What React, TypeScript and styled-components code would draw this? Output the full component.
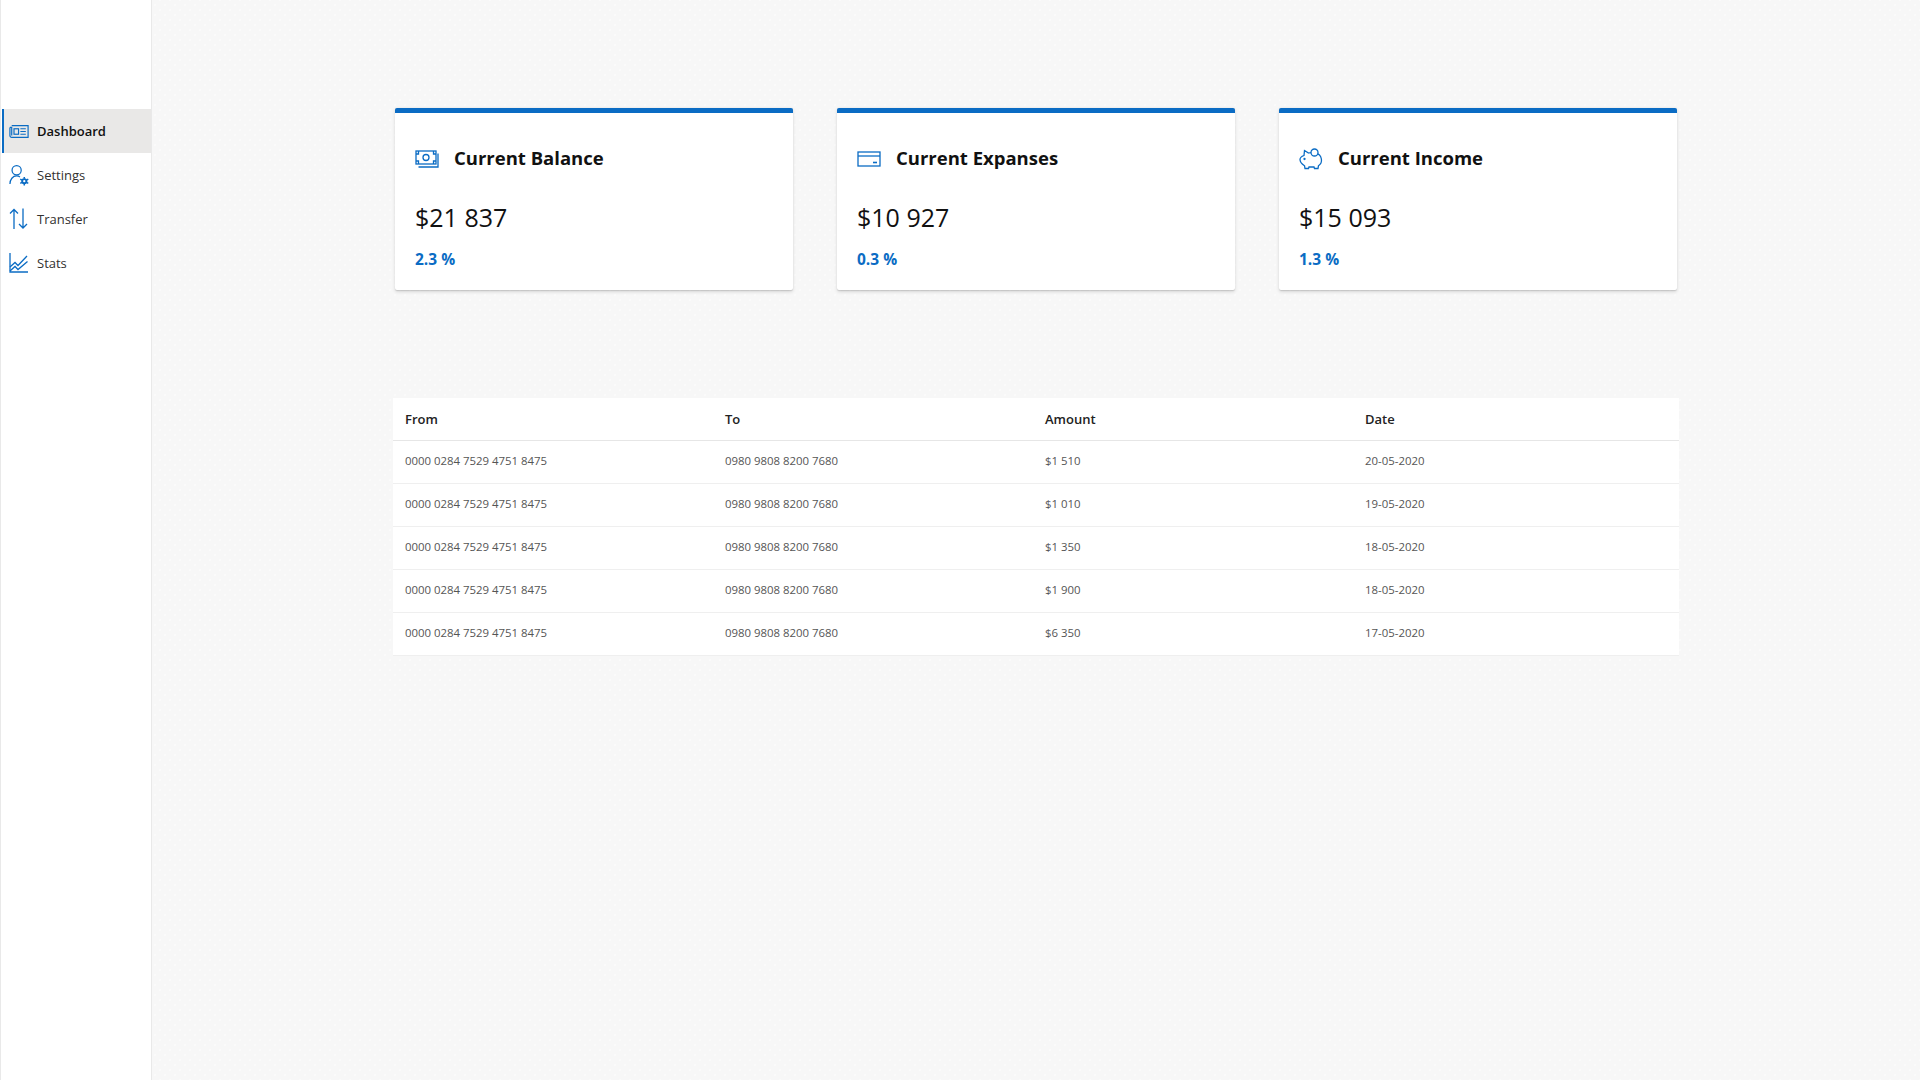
import React from 'react';
import styled, { createGlobalStyle } from 'styled-components';

const BLUE = '#0b6cc4';

const GlobalStyle = createGlobalStyle`
  html, body {
    margin: 0;
    padding: 0;
    height: 100%;
  }
  body {
    background-color: #f7f7f7;
    background-image: radial-gradient(circle, #fdfdfd 0.6px, transparent 0.9px),
      radial-gradient(circle, #fdfdfd 0.6px, transparent 0.9px);
    background-size: 10px 10px;
    background-position: 0 0, 5px 5px;
    font-family: "Open Sans", "Noto Sans", "Liberation Sans", sans-serif;
    color: #111;
  }
`;

const Page = styled.div`
  display: flex;
  height: 1080px;
  overflow: hidden;
`;

const Sidebar = styled.aside`
  width: 152px;
  flex: none;
  box-sizing: border-box;
  padding-top: 109px;
  padding-left: 1px;
  background: #fff;
  border-left: 1px solid #e9e9e9;
  border-right: 1px solid #e9e9e9;
`;

const NavList = styled.ul`
  list-style: none;
  margin: 0;
  padding: 0;
`;

const NavItem = styled.li<{ $active?: boolean }>`
  display: flex;
  align-items: center;
  height: 44px;
  box-sizing: border-box;
  padding-left: 5px;
  gap: 7px;
  font-size: 13px;
  font-weight: ${({ $active }) => ($active ? 600 : 400)};
  color: ${({ $active }) => ($active ? '#111' : '#323130')};
  background: ${({ $active }) => ($active ? '#e9e8e7' : 'transparent')};
  border-left: 2px solid ${({ $active }) => ($active ? BLUE : 'transparent')};
`;

const NavIconSlot = styled.span`
  display: flex;
  align-items: center;
  width: 21px;
  flex: none;
`;

const Main = styled.main`
  flex: 1;
  display: flex;
  flex-direction: column;
  align-items: center;
  padding-top: 108px;
`;

const Content = styled.div`
  width: 1286px;
`;

const CardRow = styled.div`
  display: flex;
  gap: 44px;
  padding: 0 2px;
  margin-bottom: 108px;
`;

const Card = styled.section`
  width: 398px;
  height: 182px;
  box-sizing: border-box;
  padding: 30px 20px 0;
  background: #fff;
  border-top: 5px solid ${BLUE};
  border-radius: 2px;
  box-shadow: 0 1.6px 3.6px rgba(0, 0, 0, 0.13), 0 0.3px 0.9px rgba(0, 0, 0, 0.11);
`;

const CardHead = styled.div`
  display: flex;
  align-items: center;
  gap: 15px;
  height: 28px;
`;

const CardIconSlot = styled.span`
  display: flex;
  flex: none;
  padding-top: 3px;
`;

const CardTitle = styled.h2`
  margin: 0;
  font-size: 18.5px;
  font-weight: 700;
  color: #111;
`;

const Value = styled.div`
  margin-top: 29px;
  font-size: 25px;
  line-height: 34px;
  color: #111;
`;

const Percent = styled.div`
  margin-top: 15px;
  font-size: 15.5px;
  line-height: 20px;
  font-weight: 700;
  color: ${BLUE};
`;

const Table = styled.table`
  width: 100%;
  border-collapse: collapse;
  table-layout: fixed;
  background: #fff;
`;

const Col = styled.col`
  width: 320px;
`;

const Th = styled.th`
  height: 42px;
  padding: 0 0 0 12px;
  text-align: left;
  font-size: 13px;
  font-weight: 600;
  color: #222;
  border-bottom: 1px solid #e6e6e6;
`;

const Td = styled.td`
  height: 43px;
  padding: 0 0 3px 12px;
  box-sizing: border-box;
  font-size: 11.4px;
  color: #555;
  border-bottom: 1px solid #efefef;
`;

const Icon = styled.svg`
  flex: none;
  fill: none;
  stroke: ${BLUE};
  stroke-width: 1.3;
`;

const DashboardIcon = () => (
  <Icon width="20" height="15" viewBox="0 0 22 16">
    <path d="M3 1.5h18v13H3a2 2 0 0 1-2-2V3.500" />
    <path d="M1 3.500h2v9" />
    <rect x="5.500" y="5" width="5" height="6" />
    <path d="M12.500 5h6M12.500 8h6M12.500 11h6" />
  </Icon>
);

const SettingsIcon = () => (
  <Icon width="21" height="23" viewBox="0 0 22 24">
    <circle cx="8" cy="6.500" r="4.800" />
    <path d="M1 21c0-5 3-8.500 7-8.500 1.500 0 2.500.3 3.500 1" />
    <circle cx="16" cy="18" r="2.200" strokeWidth="2" />
    <path d="M16 13.500v2M16 20.500v2M11.800 15.800l1.800 1M18.400 19.200l1.800 1M11.800 20.200l1.800-1M18.400 16.800l1.800-1" strokeWidth="1.600" />
  </Icon>
);

const TransferIcon = () => (
  <Icon width="20" height="22" viewBox="0 0 20 22">
    <path d="M5 21V1.500M1 5.500l4-4 4 4" />
    <path d="M14 .5V20M10 16l4 4 4-4" />
  </Icon>
);

const StatsIcon = () => (
  <Icon width="20" height="20" viewBox="0 0 20 20">
    <path d="M1 0v19h18" />
    <path d="M1 14l5-4.500 3 3L18 3" />
    <path d="M1 18l5-4.500 3 3 9.500-8" />
  </Icon>
);

const MoneyIcon = () => (
  <Icon width="24" height="18" viewBox="0 0 24 18">
    <rect x="1" y="1" width="20" height="13" />
    <path d="M23 3.500V17H3.500" />
    <circle cx="11" cy="7.500" r="3" />
    <path d="M1 4h2.500V1M21 4h-2.500V1M1 11h2.500v3M21 11h-2.500v3" />
  </Icon>
);

const CardIcon = () => (
  <Icon width="24" height="16" viewBox="0 0 24 16">
    <rect x="1" y="1" width="22" height="14" />
    <path d="M1 5h22" />
    <path d="M16 11.500h4" strokeWidth="1.600" />
  </Icon>
);

const PiggyIcon = () => (
  <Icon width="24" height="22" viewBox="0 0 24 22">
    <path d="M5.500 2.500L9.500 5C11 4.500 18 4 20.500 7c2 2 2.500 6 1.500 8-.6 1.200-1.500 2-2.500 2.700l-.5 2.800h-3.500l-.5-1.500h-5l-.5 1.500H6l-.5-2.800C3.500 16.500 1 14 1 11.500 1 9.500 3.500 8 5 7.500z" />
    <circle cx="15.500" cy="4.500" r="3.500" fill="#fff" />
    <circle cx="5.500" cy="11" r=".5" />
  </Icon>
);

const nav = [
  { label: 'Dashboard', icon: <DashboardIcon />, active: true },
  { label: 'Settings', icon: <SettingsIcon /> },
  { label: 'Transfer', icon: <TransferIcon /> },
  { label: 'Stats', icon: <StatsIcon /> },
];

const cards = [
  { title: 'Current Balance', value: '$21 837', percent: '2.3 %', icon: <MoneyIcon /> },
  { title: 'Current Expanses', value: '$10 927', percent: '0.3 %', icon: <CardIcon /> },
  { title: 'Current Income', value: '$15 093', percent: '1.3 %', icon: <PiggyIcon /> },
];

const rows = [
  ['$1 510', '20-05-2020'],
  ['$1 010', '19-05-2020'],
  ['$1 350', '18-05-2020'],
  ['$1 900', '18-05-2020'],
  ['$6 350', '17-05-2020'],
];

export default function App() {
  return (
    <Page>
      <GlobalStyle />
      <Sidebar>
        <NavList>
          {nav.map((item) => (
            <NavItem key={item.label} $active={item.active}>
              <NavIconSlot>{item.icon}</NavIconSlot>
              {item.label}
            </NavItem>
          ))}
        </NavList>
      </Sidebar>
      <Main>
        <Content>
          <CardRow>
            {cards.map((card) => (
              <Card key={card.title}>
                <CardHead>
                  <CardIconSlot>{card.icon}</CardIconSlot>
                  <CardTitle>{card.title}</CardTitle>
                </CardHead>
                <Value>{card.value}</Value>
                <Percent>{card.percent}</Percent>
              </Card>
            ))}
          </CardRow>
          <Table>
            <colgroup>
              <Col />
              <Col />
              <Col />
              <col />
            </colgroup>
            <thead>
              <tr>
                <Th>From</Th>
                <Th>To</Th>
                <Th>Amount</Th>
                <Th>Date</Th>
              </tr>
            </thead>
            <tbody>
              {rows.map(([amount, date], i) => (
                <tr key={i}>
                  <Td>0000 0284 7529 4751 8475</Td>
                  <Td>0980 9808 8200 7680</Td>
                  <Td>{amount}</Td>
                  <Td>{date}</Td>
                </tr>
              ))}
            </tbody>
          </Table>
        </Content>
      </Main>
    </Page>
  );
}
